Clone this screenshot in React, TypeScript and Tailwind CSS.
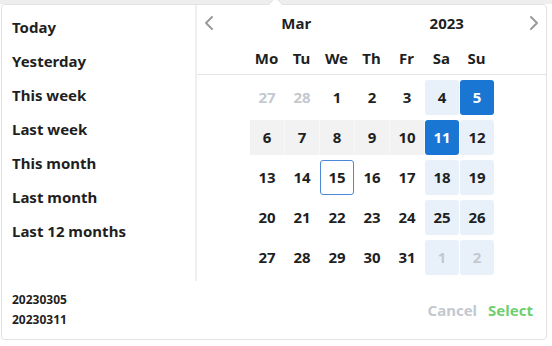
import React from 'react'

const shortcuts = ['Today', 'Yesterday', 'This week', 'Last week', 'This month', 'Last month', 'Last 12 months']
const weekdays = ['Mo', 'Tu', 'We', 'Th', 'Fr', 'Sa', 'Su']

type Day = { n: number; muted?: boolean }

const days: Day[] = [
  { n: 27, muted: true },
  { n: 28, muted: true },
  ...Array.from({ length: 31 }, (_, i) => ({ n: i + 1 })),
  { n: 1, muted: true },
  { n: 2, muted: true },
]

function cellClass(i: number, d: Day) {
  const base = 'h-[35px] flex items-center justify-center rounded-[3px]'
  if (!d.muted && (d.n === 5 || d.n === 11)) return `${base} bg-[#1976d2] text-white`
  if (!d.muted && d.n === 15) return `${base} border border-[#4a88d6] text-[#1f1f1f]`
  if (!d.muted && d.n >= 6 && d.n <= 10)
    return `${base} rounded-none bg-[#f2f2f2] shadow-[1px_0_0_#f7f7f7] text-[#1f1f1f]`
  const col = i % 7
  if (col >= 5 && i > 2) {
    return `${base} bg-[#e8f0fa] ${d.muted ? 'text-[#c4c8cf]' : 'text-[#1f1f1f]'}`
  }
  return `${base} ${d.muted ? 'text-[#c4c8cf]' : 'text-[#1f1f1f]'}`
}

function Chevron({ dir }: { dir: 'left' | 'right' }) {
  return (
    <svg width="10" height="16" viewBox="0 0 10 16" fill="none">
      <polyline
        points={dir === 'left' ? '8,2 2,8 8,14' : '2,2 8,8 2,14'}
        stroke="#9a9a9a"
        strokeWidth="2"
        strokeLinecap="round"
        strokeLinejoin="round"
      />
    </svg>
  )
}

export default function App() {
  return (
    <div className="w-[552px] h-[346px] bg-white font-['Noto_Sans',sans-serif] font-bold text-[#1f1f1f]">
      <div className="h-[4px] bg-[#eeeeee]" />
      <div className="relative ml-[1px] w-[546px] h-[336px] border border-[#e2e2e2] rounded-[4px] bg-white flex flex-col">
        <div className="absolute -top-[6px] left-[268px] w-[11px] h-[11px] rotate-45 bg-white border-l border-t border-[#e2e2e2]" />
        <div className="flex h-[276px]">
          <div className="w-[195px] border-r-2 border-[#efefef] pt-[5px] pl-[10px]">
            {shortcuts.map((s) => (
              <div key={s} className="h-[34px] flex items-center text-[15px]">
                {s}
              </div>
            ))}
          </div>
          <div className="flex-1 flex flex-col">
            <div className="h-[36px] flex items-center">
              <div className="w-[24px] flex justify-center">
                <Chevron dir="left" />
              </div>
              <div className="flex-1 text-center text-[15px]">Mar</div>
              <div className="flex-1 text-center text-[15px]">2023</div>
              <div className="w-[24px] flex justify-center">
                <Chevron dir="right" />
              </div>
            </div>
            <div className="h-[34px] border-b border-[#e5e5e5] flex justify-center">
              <div className="grid grid-cols-[repeat(7,34px)] gap-x-px">
                {weekdays.map((w) => (
                  <div key={w} className="h-[34px] flex items-center justify-center text-[15px]">
                    {w}
                  </div>
                ))}
              </div>
            </div>
            <div className="flex justify-center pt-[5px] pl-[1px]">
              <div className="grid grid-cols-[repeat(7,34px)] gap-x-px gap-y-[5px] text-[15px]">
                {days.map((d, i) => (
                  <div key={i} className={cellClass(i, d)}>
                    {d.n}
                  </div>
                ))}
              </div>
            </div>
          </div>
        </div>
        <div className="flex-1 flex items-center justify-between pl-[10px] pr-[13px]">
          <div className="text-[12px] leading-[20px]">
            <div>20230305</div>
            <div>20230311</div>
          </div>
          <div className="flex gap-[11px] text-[15px]">
            <span className="text-[#c4c8cf]">Cancel</span>
            <span className="text-[#6fcf6f]">Select</span>
          </div>
        </div>
      </div>
    </div>
  )
}
